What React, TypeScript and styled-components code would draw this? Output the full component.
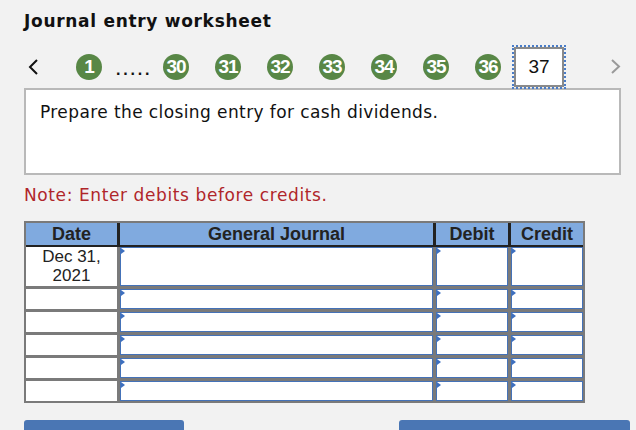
import styled, { createGlobalStyle } from 'styled-components';

const GlobalStyle = createGlobalStyle`
  html, body {
    margin: 0;
    padding: 0;
    background: #f2f2f2;
  }
  * {
    box-sizing: border-box;
  }
`;

const steps = [30, 31, 32, 33, 34, 35, 36];
const rows = [{ date: ['Dec 31,', '2021'] }, {}, {}, {}, {}, {}];

const App = () => {
  return (
    <>
      <GlobalStyle />
      <Page>
        <Title>Journal entry worksheet</Title>
        <NavRow>
          <Arrow aria-label="previous">
            <svg width="10" height="16" viewBox="0 0 10 16">
              <polyline points="9,1 2,8 9,15" fill="none" stroke="#111" strokeWidth="2" />
            </svg>
          </Arrow>
          <Step>1</Step>
          <Dots>.....</Dots>
          <StepGroup>
            {steps.map((n) => (
              <Step key={n}>{n}</Step>
            ))}
          </StepGroup>
          <Current>37</Current>
          <Arrow aria-label="next" $next>
            <svg width="11" height="15" viewBox="0 0 11 15">
              <polyline points="2,1 9,7.5 2,14" fill="none" stroke="#9a9a9a" strokeWidth="2" />
            </svg>
          </Arrow>
        </NavRow>
        <Prompt>Prepare the closing entry for cash dividends.</Prompt>
        <Note>Note: Enter debits before credits.</Note>
        <Sheet>
          <HeaderRow>
            <HeadCell>Date</HeadCell>
            <HeadCell>General Journal</HeadCell>
            <HeadCell>Debit</HeadCell>
            <HeadCell>Credit</HeadCell>
          </HeaderRow>
          <Body>
            {rows.map((row, idx) => (
              <Row key={idx} $tall={idx === 0}>
                <DateCell>
                  {row.date?.map((line) => (
                    <span key={line}>{line}</span>
                  ))}
                </DateCell>
                <Entry />
                <Entry />
                <Entry />
              </Row>
            ))}
          </Body>
        </Sheet>
        <Actions>
          <ActionButton $w={160} aria-label="record entry" />
          <ActionButton $w={231} aria-label="view general journal" />
        </Actions>
      </Page>
    </>
  );
};

const Page = styled.div`
  padding: 11px 0 0 24px;
  width: 636px;
  height: 430px;
  overflow: hidden;
`;

const Title = styled.h1`
  margin: 0;
  font-family: 'DejaVu Sans', Verdana, sans-serif;
  font-size: 17px;
  line-height: 20px;
  letter-spacing: 0.7px;
  font-weight: bold;
  color: #111;
`;

const NavRow = styled.div`
  display: flex;
  align-items: center;
  height: 43px;
  margin-top: 14px;
  padding-left: 4px;
`;

const Arrow = styled.span<{ $next?: boolean }>`
  display: flex;
  align-items: center;
  margin-right: ${(p) => (p.$next ? 0 : 38)}px;
  margin-left: ${(p) => (p.$next ? 46 : 0)}px;
`;

const Step = styled.span`
  display: flex;
  align-items: center;
  justify-content: center;
  width: 26px;
  height: 26px;
  border-radius: 50%;
  background: #588746;
  color: #fff;
  font-family: 'Liberation Sans', Arial, sans-serif;
  font-weight: bold;
  font-size: 19px;
  letter-spacing: -1px;
`;

const Dots = styled.span`
  width: 34px;
  margin: 6px 13px 0 14px;
  font-family: 'Liberation Sans', Arial, sans-serif;
  font-weight: bold;
  font-size: 16px;
  letter-spacing: 2.8px;
  color: #111;
`;

const StepGroup = styled.div`
  display: flex;
  gap: 26px;
`;

const Current = styled.span`
  display: flex;
  align-items: center;
  justify-content: center;
  width: 50px;
  height: 40px;
  margin-left: 13px;
  background: #fff;
  border: 2px solid #8a8a8a;
  outline: 2px dotted #4a7dc8;
  font-family: 'Liberation Sans', Arial, sans-serif;
  font-size: 19px;
  color: #111;
`;

const Prompt = styled.div`
  width: 597px;
  height: 87px;
  padding: 12px 14px 0;
  background: #fff;
  border: 2px solid #b9b9b9;
  font-family: 'DejaVu Sans', Verdana, sans-serif;
  font-size: 17px;
  letter-spacing: 0.4px;
  line-height: 20px;
  color: #111;
`;

const Note = styled.div`
  margin-top: 10px;
  font-family: 'DejaVu Sans', Verdana, sans-serif;
  font-size: 17px;
  letter-spacing: 0.6px;
  line-height: 20px;
  color: #b0262a;
`;

const columns = '91px 313px 72px 72px';

const Sheet = styled.div`
  width: 561px;
  margin-top: 16px;
  border: 2px solid #7a7a7a;
  background: #7a7a7a;
`;

const HeaderRow = styled.div`
  display: grid;
  grid-template-columns: ${columns};
  column-gap: 3px;
  background: #222;
  border-bottom: 2px solid #222;
`;

const HeadCell = styled.div`
  height: 22px;
  background: #80aadf;
  text-align: center;
  font-family: 'Liberation Sans', Arial, sans-serif;
  font-weight: bold;
  font-size: 18px;
  line-height: 22px;
  color: #222;
`;

const Body = styled.div`
  display: flex;
  flex-direction: column;
  gap: 3px;
`;

const Row = styled.div<{ $tall?: boolean }>`
  display: grid;
  grid-template-columns: ${columns};
  column-gap: 3px;
  height: ${(p) => (p.$tall ? 39 : 20)}px;
`;

const DateCell = styled.div`
  display: flex;
  flex-direction: column;
  align-items: center;
  background: #fff;
  font-family: 'Liberation Sans', Arial, sans-serif;
  font-size: 17px;
  line-height: 19px;
  color: #222;
`;

const Entry = styled.div`
  position: relative;
  background: #fff;
  border: 1.5px solid #4472b8;

  &::before {
    content: '';
    position: absolute;
    top: 0;
    left: 0;
    border-left: 4px solid #3d6fbf;
    border-top: 3px solid transparent;
    border-bottom: 3px solid transparent;
  }
`;

const Actions = styled.div`
  display: flex;
  justify-content: space-between;
  width: 606px;
  margin-top: 17px;
`;

const ActionButton = styled.button<{ $w: number }>`
  width: ${(p) => p.$w}px;
  height: 36px;
  border: none;
  border-radius: 3px;
  background: #4a76b4;
`;

export default App;
